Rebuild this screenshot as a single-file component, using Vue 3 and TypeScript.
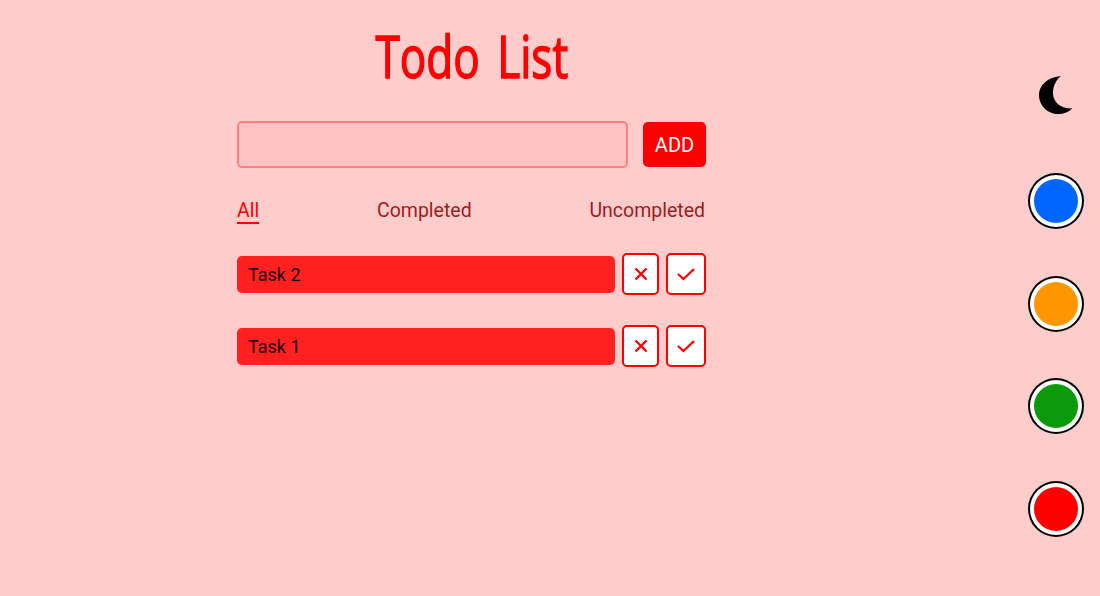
<script setup lang="ts">
import { ref } from 'vue';

const filters = ['All', 'Completed', 'Uncompleted'];
const tasks = ref(['Task 2', 'Task 1']);
const themes = ['#0066ff', '#ff9500', '#0a9a0a', '#ff0000'];
</script>

<template>
  <div class="page">
    <main class="todo">
      <h1 class="title"><span>Todo List</span></h1>
      <form class="add-row" @submit.prevent>
        <input class="add-input" type="text" />
        <button class="add-btn" type="submit">ADD</button>
      </form>
      <nav class="filters">
        <a v-for="(f, i) in filters" :key="f" class="filter" :class="{ active: i === 0 }">{{ f }}</a>
      </nav>
      <ul class="tasks">
        <li v-for="t in tasks" :key="t" class="task">
          <span class="task-name">{{ t }}</span>
          <button class="task-btn" type="button" aria-label="Delete">
            <svg width="14" height="14" viewBox="0 0 14 14">
              <path d="M1.5 1.5 12.5 12.5M12.5 1.5 1.5 12.5" fill="none" stroke="#ff0000" stroke-width="2.3" />
            </svg>
          </button>
          <button class="task-btn" type="button" aria-label="Complete">
            <svg width="18" height="14" viewBox="0 0 18 14">
              <path d="M1 7 6.5 12 17 2" fill="none" stroke="#ff0000" stroke-width="2.3" />
            </svg>
          </button>
        </li>
      </ul>
    </main>
    <aside class="side">
      <svg class="moon" width="36" height="42" viewBox="0 0 36 42">
        <path d="M23 2C10 3 1 11 1 21C1 32 10 40 20 40C26 40 31 38 34.5 34C33 34.5 31 34.5 29 34C21 33 15 27 15 19C15 12 18 6 23 2Z" fill="#000" />
      </svg>
      <button v-for="c in themes" :key="c" class="swatch" type="button" :style="{ background: c }"></button>
    </aside>
  </div>
</template>

<style>
html,
body {
  margin: 0;
  background: #ffcccc;
}
</style>

<style scoped>
.page {
  display: flex;
  justify-content: space-between;
  height: 596px;
  overflow: hidden;
  background: #ffcccc;
  font-family: Roboto, "Liberation Sans", sans-serif;
}

.todo {
  width: 469px;
  margin-left: 237px;
}

.title {
  margin: 0;
  height: 121px;
  padding-top: 20px;
  box-sizing: border-box;
  text-align: center;
  color: #ff0000;
  font-family: "Open Sans", sans-serif;
  font-size: 58px;
  line-height: 72px;
  font-weight: 400;
  word-spacing: 8px;
}

.title span {
  display: inline-block;
  transform: scaleX(0.76);
  -webkit-text-stroke: 1.5px #ff0000;
}

.add-row {
  display: flex;
  align-items: center;
  justify-content: space-between;
}

.add-input {
  width: 391px;
  height: 47px;
  box-sizing: border-box;
  border: 2px solid #ff8080;
  border-radius: 5px;
  background: #ffc2c2;
  outline: none;
}

.add-btn {
  width: 63px;
  height: 45px;
  padding: 0;
  border: none;
  border-radius: 5px;
  background: #ff0000;
  color: #fff;
  font-family: inherit;
  font-size: 20px;
}

.filters {
  display: flex;
  justify-content: space-between;
  margin-top: 30px;
  padding-right: 1px;
  font-size: 19.5px;
  line-height: 25px;
}

.filter {
  color: #9e1c1c;
  height: 24px;
}

.filter.active {
  color: #ff0000;
  border-bottom: 2px solid #ff0000;
}

.tasks {
  list-style: none;
  margin: 29px 0 0;
  padding: 0;
}

.task {
  display: flex;
  align-items: center;
  height: 42px;
  margin-bottom: 30px;
}

.task-name {
  flex: 0 0 378px;
  height: 37px;
  box-sizing: border-box;
  padding-left: 11px;
  border-radius: 5px;
  background: #ff2020;
  color: #1a0000;
  font-size: 18px;
  line-height: 37px;
}

.task-btn {
  display: flex;
  align-items: center;
  justify-content: center;
  width: 37px;
  height: 42px;
  margin-left: 7px;
  padding: 0;
  box-sizing: border-box;
  border: 2px solid #ff0000;
  border-radius: 5px;
  background: #fff;
}

.task-btn + .task-btn {
  width: 40px;
}

.side {
  display: flex;
  flex-direction: column;
  align-items: center;
  width: 56px;
  margin-right: 16px;
  padding-top: 74px;
}

.moon {
  margin-bottom: 57px;
}

.swatch {
  flex: none;
  width: 56px;
  height: 56px;
  margin-bottom: 46.5px;
  padding: 0;
  border: none;
  border-radius: 50%;
  box-shadow: inset 0 0 0 2px #000, inset 0 0 0 6px #fff;
}
</style>
